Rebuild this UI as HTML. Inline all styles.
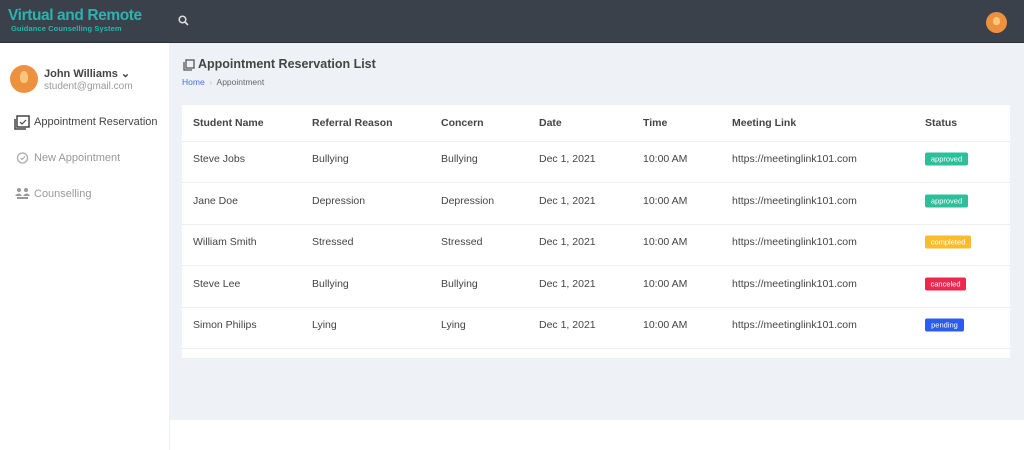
<!DOCTYPE html>
<html><head><meta charset="utf-8"><style>
*{box-sizing:border-box;margin:0;padding:0}
body{width:1024px;height:450px;overflow:hidden;font-family:"Liberation Sans",sans-serif;background:#fff;position:relative;color:#333}
.hdr{position:absolute;left:0;top:0;width:1024px;height:43px;background:#3b414b;border-bottom:1px solid #2c3037}
.logo1{position:absolute;left:8px;top:7px;color:#2bb3b0;font-weight:bold;font-size:15.5px;letter-spacing:-.4px}
.logo2{position:absolute;left:11px;top:24px;color:#2bb3b0;font-size:7.5px;font-weight:bold;letter-spacing:.1px}
.side{position:absolute;left:0;top:43px;width:170px;height:407px;background:#fff;border-right:1px solid #eef0f3}
.main{position:absolute;left:170px;top:43px;width:854px;height:377px;background:#eef2f7}
.av{position:absolute;border-radius:50%;background:#ee913f}
.av::after{content:"";position:absolute;left:35%;top:22%;width:30%;height:42%;background:#f8c77f;border-radius:50% 50% 40% 40%}
.nav{position:absolute;left:34px;font-size:11px;color:#555}
.card{position:absolute;left:182px;top:105px;width:828px;height:253px;background:#fff}
.r{position:absolute;left:0;width:828px;border-bottom:1px solid #eceef2;font-size:10.5px;color:#444}
.r span{position:absolute;top:calc(50% - 3px);transform:translateY(-50%);white-space:nowrap}
.h span{font-weight:bold;color:#444;top:50%}
.b{font-size:7.5px;color:#fff;padding:2px 0;width:43px;text-align:center;border-radius:2px}
</style></head><body>
<div class="hdr">
<div class="logo1">Virtual and Remote</div>
<div class="logo2">Guidance Counselling System</div>
<svg style="position:absolute;left:178px;top:15px" width="11" height="11" viewBox="0 0 11 11"><circle cx="4.5" cy="4.5" r="3.3" fill="none" stroke="#ddd" stroke-width="1.5"/><path d="M7 7l3 3" stroke="#ddd" stroke-width="1.6"/></svg>
<div class="av" style="left:986px;top:12px;width:21px;height:21px"></div>
</div>
<div class="side">
<div class="av" style="left:10px;top:22px;width:28px;height:28px"></div>
<div style="position:absolute;left:44px;top:24px;font-size:11px;font-weight:bold;color:#444">John Williams ⌄</div>
<div style="position:absolute;left:44px;top:38px;font-size:10px;color:#999">student@gmail.com</div>
<svg style="position:absolute;left:14px;top:71px" width="16" height="16" viewBox="0 0 16 16"><rect x="3" y="2" width="12" height="11" fill="none" stroke="#444" stroke-width="1.5"/><path d="M1 5v10h11" fill="none" stroke="#444" stroke-width="1.5"/><path d="M6 8l2 2 4-4" fill="none" stroke="#444" stroke-width="1.2"/></svg>
<div class="nav" style="top:73px;color:#444">Appointment Reservation</div>
<svg style="position:absolute;left:16px;top:108px" width="13" height="13" viewBox="0 0 13 13"><circle cx="6.5" cy="7" r="5" fill="none" stroke="#aaa" stroke-width="1.3"/><path d="M4.5 7l1.5 1.5 3-3" fill="none" stroke="#aaa" stroke-width="1.2"/></svg>
<div class="nav" style="top:109px;color:#999">New Appointment</div>
<svg style="position:absolute;left:15px;top:144px" width="15" height="13" viewBox="0 0 15 13"><circle cx="4" cy="3" r="2" fill="#999"/><circle cx="11" cy="3" r="2" fill="#999"/><path d="M0 9q4-5 7 0zM8 9q4-5 7 0z" fill="#999"/><rect x="2" y="10" width="11" height="2" fill="#999"/></svg>
<div class="nav" style="top:145px;color:#999">Counselling</div>
</div>
<div class="main"></div>
<svg style="position:absolute;left:183px;top:59px" width="12" height="12" viewBox="0 0 12 12"><rect x="3" y="1" width="8" height="8" fill="none" stroke="#555" stroke-width="1.3"/><path d="M1 3v8h8" fill="none" stroke="#555" stroke-width="1.3"/></svg>
<div style="position:absolute;left:198px;top:57px;font-size:12.5px;font-weight:bold;color:#444">Appointment Reservation List</div>
<div style="position:absolute;left:182px;top:77px;font-size:8.5px;color:#666"><span style="color:#4a6ee0">Home</span> &nbsp;<span style="color:#bbb">›</span>&nbsp; Appointment</div>
<div class="card">
<div class="r h" style="top:0;height:37px"><span style="left:11px">Student Name</span><span style="left:130px">Referral Reason</span><span style="left:259px">Concern</span><span style="left:357px">Date</span><span style="left:461px">Time</span><span style="left:550px">Meeting Link</span><span style="left:743px">Status</span></div>
<div class="r" style="top:37px;height:41px"><span style="left:11px">Steve Jobs</span><span style="left:130px">Bullying</span><span style="left:259px">Bullying</span><span style="left:357px">Dec 1, 2021</span><span style="left:461px">10:00 AM</span><span style="left:550px">https://meetinglink101.com</span><span style="left:743px;background:#2bbf9b" class="b">approved</span></div>
<div class="r" style="top:78px;height:42px"><span style="left:11px">Jane Doe</span><span style="left:130px">Depression</span><span style="left:259px">Depression</span><span style="left:357px">Dec 1, 2021</span><span style="left:461px">10:00 AM</span><span style="left:550px">https://meetinglink101.com</span><span style="left:743px;background:#2bbf9b" class="b">approved</span></div>
<div class="r" style="top:120px;height:41px"><span style="left:11px">William Smith</span><span style="left:130px">Stressed</span><span style="left:259px">Stressed</span><span style="left:357px">Dec 1, 2021</span><span style="left:461px">10:00 AM</span><span style="left:550px">https://meetinglink101.com</span><span style="left:743px;background:#fbbb2e;width:46px" class="b">completed</span></div>
<div class="r" style="top:161px;height:42px"><span style="left:11px">Steve Lee</span><span style="left:130px">Bullying</span><span style="left:259px">Bullying</span><span style="left:357px">Dec 1, 2021</span><span style="left:461px">10:00 AM</span><span style="left:550px">https://meetinglink101.com</span><span style="left:743px;background:#f0264f;width:41px" class="b">canceled</span></div>
<div class="r" style="top:203px;height:41px"><span style="left:11px">Simon Philips</span><span style="left:130px">Lying</span><span style="left:259px">Lying</span><span style="left:357px">Dec 1, 2021</span><span style="left:461px">10:00 AM</span><span style="left:550px">https://meetinglink101.com</span><span style="left:743px;background:#2a5cf0;width:39px" class="b">pending</span></div>
</div>
</body></html>
